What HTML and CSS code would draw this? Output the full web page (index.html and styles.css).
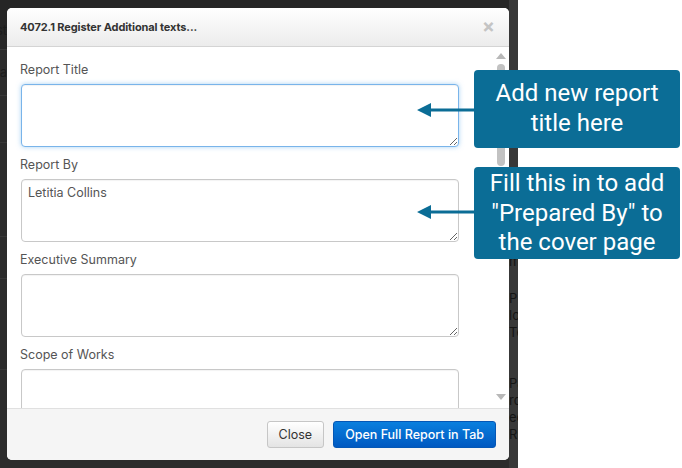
FILE: index.html
```html
<!DOCTYPE html>
<html lang="en">
<head>
    <meta charset="UTF-8">
    <title>4072.1 Register Additional texts</title>
    <link rel="stylesheet" href="styles.css">
</head>
<body>
    <div class="screen">
        <div class="backdrop">
            <div class="bg-table">
                <div class="bg-row r1"><span class="edge">st</span><span class="mid"></span><span class="side"></span></div>
                <div class="bg-row r2"><span class="edge">da</span><span class="mid"></span><span class="side"></span></div>
                <div class="bg-row r3"><span class="edge"></span><span class="mid"></span><span class="side"></span></div>
                <div class="bg-row r4"><span class="edge"></span><span class="mid"></span><span class="side"></span></div>
                <div class="bg-row r5"><span class="edge"></span><span class="mid"></span><span class="side">m</span></div>
                <div class="bg-row r6"><span class="edge"></span><span class="mid"></span><span class="side">P<br>lo<br>Te</span></div>
                <div class="bg-row r7"><span class="edge"></span><span class="mid"></span><span class="side">Pa<br>rd<br>ec<br>RI</span></div>
            </div>

            <div class="modal">
                <div class="modal-header">
                    <span class="modal-title">4072.1 Register Additional texts...</span>
                    <span class="modal-close">&times;</span>
                </div>
                <div class="modal-body">
                    <div class="fields">
                        <label>Report Title</label>
                        <textarea class="focus"></textarea>
                        <label>Report By</label>
                        <textarea>Letitia Collins</textarea>
                        <label>Executive Summary</label>
                        <textarea></textarea>
                        <label>Scope of Works</label>
                        <textarea></textarea>
                    </div>
                    <div class="scrollbar">
                        <span class="arrow up"></span>
                        <span class="thumb"></span>
                        <span class="arrow down"></span>
                    </div>
                </div>
                <div class="modal-footer">
                    <button class="btn">Close</button>
                    <button class="btn primary">Open Full Report in Tab</button>
                </div>
            </div>
        </div>

        <div class="callout one">Add new report<br>title here</div>
        <div class="callout two">Fill this in to add<br>"Prepared By" to<br>the cover page</div>
        <svg class="pointer one" width="58" height="16" viewBox="0 0 58 16">
            <path d="M0 8 L14 1 L14 6.5 L58 6.5 L58 9.5 L14 9.5 L14 15 Z" fill="#0b6d96"/>
        </svg>
        <svg class="pointer two" width="58" height="16" viewBox="0 0 58 16">
            <path d="M0 8 L14 1 L14 6.5 L58 6.5 L58 9.5 L14 9.5 L14 15 Z" fill="#0b6d96"/>
        </svg>
    </div>
</body>
</html>
```

FILE: styles.css
```css
body {
    margin: 0;
    background: #fff;
    font-family: Inter, "Liberation Sans", sans-serif;
}
.screen {
    position: relative;
    width: 682px;
    height: 468px;
    overflow: hidden;
}
.backdrop {
    position: relative;
    width: 518px;
    height: 468px;
    background: #2c2c2c;
}

/* dimmed page behind the dialog */
.bg-table { display: flex; flex-direction: column; height: 468px; }
.bg-row {
    display: flex;
    box-sizing: border-box;
    border-bottom: 1px solid #383838;
    font-size: 13px;
    line-height: 17px;
    color: #141414;
    overflow: hidden;
}
.bg-row.r1 { height: 50px; background: #262626; }
.bg-row.r2 { height: 46px; }
.bg-row.r3 { height: 47px; }
.bg-row.r4 { height: 94px; }
.bg-row.r5 { height: 42px; }
.bg-row.r6 { height: 91px; }
.bg-row.r7 { flex: 1; border-bottom: none; }
.bg-row .edge { width: 7px; overflow: hidden; direction: rtl; color: #1c1c1c; }
.bg-row .mid { flex: 1; }
.bg-row .side { width: 9px; overflow: hidden; background: #383838; }
.r1 .edge { padding-top: 22px; }
.r2 .edge { padding-top: 14px; }
.r5 .side { padding-top: 16px; }
.r6 .side { padding-top: 11px; }
.r7 .side { padding-top: 5px; }

.modal {
    position: absolute;
    top: 8px;
    left: 7px;
    width: 502px;
    height: 452px;
    background: #fff;
    border-radius: 5px;
    overflow: hidden;
    display: flex;
    flex-direction: column;
}
.modal-header {
    height: 38px;
    flex: none;
    display: flex;
    align-items: center;
    justify-content: space-between;
    padding: 0 14px 0 13px;
    background: linear-gradient(#fff, #ececec);
    border-bottom: 1px solid #d4d4d4;
}
.modal-title { font-size: 11px; font-weight: 700; color: #333; letter-spacing: -0.1px; }
.modal-close { font-size: 19px; color: #c4c4c4; font-weight: 700; line-height: 1; margin-top: -2px; }

.modal-body {
    flex: 1;
    display: flex;
    overflow: hidden;
}
.fields {
    flex: 1;
    display: flex;
    flex-direction: column;
    padding: 14px 36px 0 14px;
    overflow: hidden;
}
.fields label {
    font-size: 12.5px;
    line-height: 18px;
    color: #555;
    margin: 9px 0 5px -1px;
}
.fields label:first-child { margin-top: 0; }
.fields textarea {
    flex: none;
    box-sizing: border-box;
    width: 438px;
    height: 63px;
    margin: 0;
    padding: 5px 6px;
    border: 1px solid #c8c8c8;
    border-radius: 4px;
    font-family: Inter, "Liberation Sans", sans-serif;
    font-size: 12.5px;
    color: #555;
    background: #fff;
    box-shadow: inset 0 1px 1px rgba(0, 0, 0, 0.05);
}
.fields textarea.focus {
    border-color: #79b4ea;
    box-shadow: inset 0 1px 1px rgba(0, 0, 0, 0.05), 0 0 5px rgba(102, 175, 233, 0.55);
}
.scrollbar {
    width: 12px;
    margin-right: 2px;
    display: flex;
    flex-direction: column;
    align-items: center;
    padding-top: 6px;
}
.scrollbar .arrow { width: 0; height: 0; border-left: 5px solid transparent; border-right: 5px solid transparent; }
.scrollbar .up { border-bottom: 6px solid #b8b8b8; }
.scrollbar .down { border-top: 6px solid #b8b8b8; margin-top: auto; margin-bottom: 8px; }
.scrollbar .thumb {
    width: 8px;
    height: 102px;
    margin-top: 5px;
    background: #c2c2c2;
    border-radius: 4px;
}

.modal-footer {
    height: 52px;
    flex: none;
    box-sizing: border-box;
    display: flex;
    align-items: center;
    justify-content: flex-end;
    gap: 9px;
    padding: 0 13px 0 0;
    background: #f5f5f5;
    border-top: 1px solid #e0e0e0;
}
.btn {
    height: 27px;
    padding: 0 11px;
    font-family: Inter, "Liberation Sans", sans-serif;
    font-size: 12.5px;
    color: #333;
    background: linear-gradient(#fff, #e4e4e4);
    border: 1px solid #c6c6c6;
    border-radius: 3px;
}
.btn.primary {
    color: #fff;
    font-weight: 500;
    background: linear-gradient(#0a7fde, #0059c1);
    border-color: #0557b5;
}

.callout {
    position: absolute;
    left: 474px;
    width: 206px;
    box-sizing: border-box;
    background: #0b6d96;
    color: #fff;
    border-radius: 4px;
    text-align: center;
    font-family: Roboto, "Liberation Sans", sans-serif;
    font-size: 24px;
}
.callout.one { top: 70px; height: 78px; line-height: 30px; padding-top: 8px; }
.callout.two { top: 167px; height: 92px; line-height: 29.5px; padding-top: 2px; }
.pointer { position: absolute; left: 417px; }
.pointer.one { top: 102px; }
.pointer.two { top: 204px; }
```
